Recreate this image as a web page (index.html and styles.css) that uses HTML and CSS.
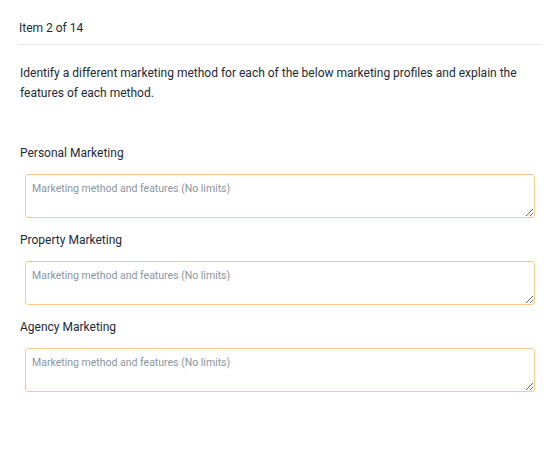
FILE: index.html
```html
<!DOCTYPE html>
<html>
<head>
<meta charset="utf-8">
<link rel="stylesheet" href="styles.css">
</head>
<body>
<div class="page">
  <div class="header">Item 2 of 14</div>
  <p class="question">Identify a different marketing method for each of the below marketing profiles and explain the features of each method.</p>
  <div class="fields">
    <div class="field">
      <label class="label">Personal Marketing</label>
      <textarea class="answer" placeholder="Marketing method and features (No limits)"></textarea>
    </div>
    <div class="field">
      <label class="label">Property Marketing</label>
      <textarea class="answer" placeholder="Marketing method and features (No limits)"></textarea>
    </div>
    <div class="field">
      <label class="label">Agency Marketing</label>
      <textarea class="answer" placeholder="Marketing method and features (No limits)"></textarea>
    </div>
  </div>
</div>
</body>
</html>
```
FILE: styles.css
```css
html, body {
  margin: 0;
  padding: 0;
  background: #ffffff;
}
body {
  font-family: Roboto, "Liberation Sans", Arial, sans-serif;
  font-size: 12px;
  line-height: 20px;
  color: #1d2a3a;
}
.page {
  width: 553px;
}
.header {
  margin: 0 13px 0 18px;
  padding: 18px 0 6px 1px;
  border-bottom: 1px solid #e4e6e9;
}
.question {
  margin: 18px 20px 0 20px;
}
.fields {
  margin-top: 40px;
  display: flex;
  flex-direction: column;
}
.field {
  display: flex;
  flex-direction: column;
}
.field + .field {
  margin-top: 12px;
}
.label {
  margin-left: 20px;
  margin-bottom: 11px;
}
.answer {
  display: block;
  box-sizing: border-box;
  margin-left: 25px;
  width: 510px;
  height: 44px;
  border: 1px solid #fcc98d;
  border-radius: 3px;
  padding: 7px 6px 5px 6px;
  font-family: Roboto, "Liberation Sans", Arial, sans-serif;
  font-size: 10.5px;
  line-height: 14px;
  color: #1d2a3a;
  outline: none;
  background: #ffffff;
}
.answer::placeholder {
  color: #8c95a2;
}
```
